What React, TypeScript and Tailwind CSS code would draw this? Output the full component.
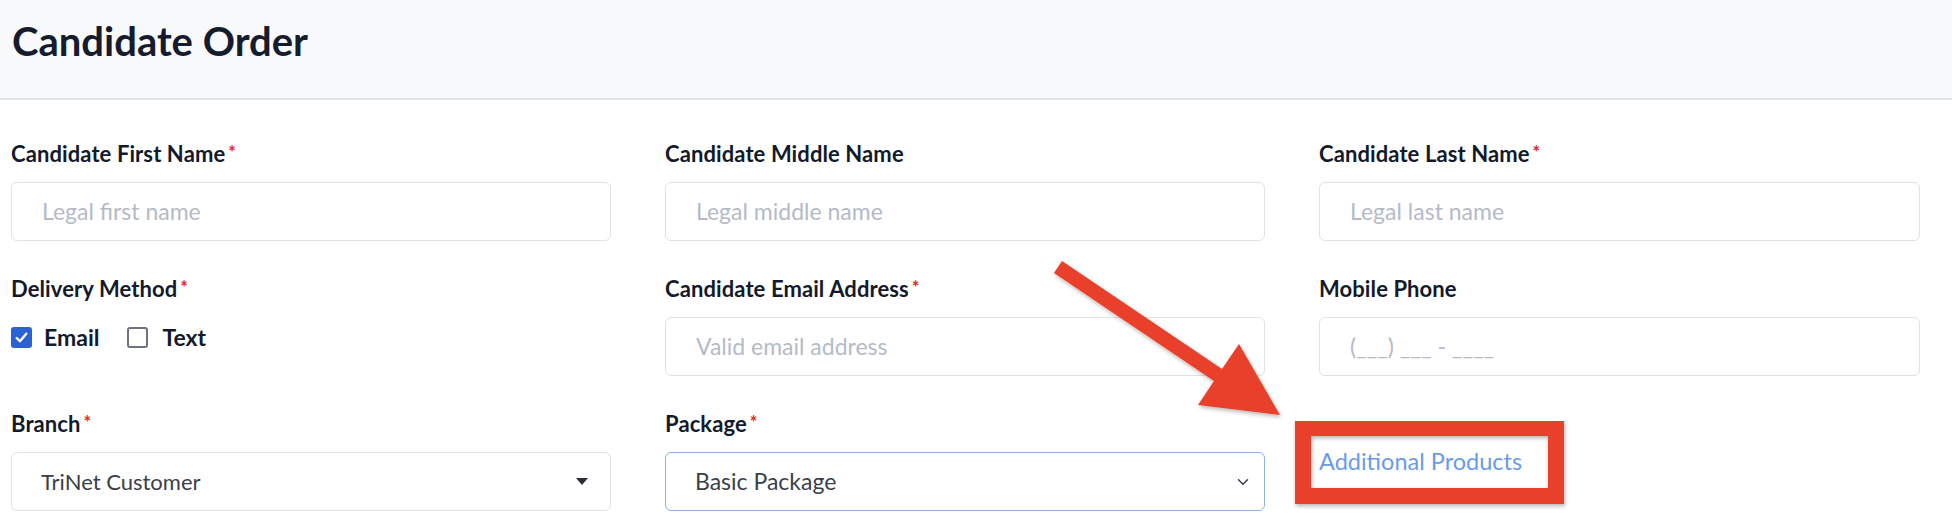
import { ChevronDown } from 'lucide-react';

const Req = () => <span className="relative top-[-3px] ml-[3px] text-[18px] leading-none text-[#e5252a]">*</span>;

function Label({ text, required }: { text: string; required?: boolean }) {
  return (
    <div className="h-[24px] mb-[16px] text-[22px] leading-[24px] font-bold text-[#131a2b] whitespace-nowrap tracking-[0.1px]">
      {text}
      {required && <Req />}
    </div>
  );
}

function TextInput({ placeholder }: { placeholder: string }) {
  return (
    <div className="h-[59px] rounded-[6px] border border-[#dde2e9] bg-white flex items-center pl-[30px] text-[23px] text-[#b5bac7]">
      {placeholder}
    </div>
  );
}

export default function App() {
  return (
    <div className="relative w-full h-[514px] overflow-hidden bg-white font-['Lato',sans-serif]">
      <div className="h-[100px] bg-[#f8f9fb] border-b-2 border-[#dfe4ea] flex items-center pl-[12px] pb-[16px]">
        <h1 className="text-[40px] font-bold text-[#161c2d]">Candidate Order</h1>
      </div>

      <div className="pl-[11px] pt-[42px] grid grid-cols-[600px_600px_601px] gap-x-[54px] gap-y-[36px]">
        <div>
          <Label text="Candidate First Name" required />
          <TextInput placeholder="Legal first name" />
        </div>
        <div>
          <Label text="Candidate Middle Name" />
          <TextInput placeholder="Legal middle name" />
        </div>
        <div>
          <Label text="Candidate Last Name" required />
          <TextInput placeholder="Legal last name" />
        </div>

        <div>
          <Label text="Delivery Method" required />
          <div className="h-[59px] flex items-start pt-[3px] text-[23px] text-[#131a2b] font-bold">
            <label className="flex items-center gap-[12px]">
              <span className="w-[21px] h-[21px] rounded-[3px] bg-[#2a62d6] flex items-center justify-center">
                <svg width="15" height="15" viewBox="0 0 14 14" fill="none">
                  <path d="M2.5 7.5 L5.5 10.5 L11.5 3.5" stroke="white" strokeWidth="2.2" strokeLinecap="round" strokeLinejoin="round" />
                </svg>
              </span>
              Email
            </label>
            <label className="flex items-center gap-[14px] ml-[28px]">
              <span className="w-[21px] h-[21px] rounded-[3px] border-2 border-[#6e7280] bg-white" />
              Text
            </label>
          </div>
        </div>
        <div>
          <Label text="Candidate Email Address" required />
          <TextInput placeholder="Valid email address" />
        </div>
        <div>
          <Label text="Mobile Phone" />
          <TextInput placeholder="(___) ___ - ____" />
        </div>

        <div>
          <Label text="Branch" required />
          <div className="h-[59px] rounded-[6px] border border-[#dde2e9] bg-white flex items-center justify-between pl-[29px] pr-[22px] text-[22px] text-[#3a3f4b]">
            TriNet Customer
            <svg width="12" height="7" viewBox="0 0 12 7">
              <path d="M0 0 L12 0 L6 7 Z" fill="#2b2f38" />
            </svg>
          </div>
        </div>
        <div>
          <Label text="Package" required />
          <div className="h-[59px] rounded-[6px] border-[1.5px] border-[#8db1e6] bg-white flex items-center justify-between pl-[29px] pr-[12px] text-[23px] text-[#3a3f4b]">
            Basic Package
            <ChevronDown size={18} strokeWidth={2} className="text-[#3a3f4b]" />
          </div>
        </div>
        <div className="pt-[36px]">
          <a className="text-[23.5px] text-[#6a9bea] leading-[26px]">Additional Products</a>
        </div>
      </div>

      <svg className="absolute inset-0 pointer-events-none" width="1952" height="514" viewBox="0 0 1952 514">
        <defs>
          <filter id="sh" x="-10%" y="-10%" width="130%" height="130%">
            <feDropShadow dx="1" dy="2" stdDeviation="2" floodColor="#000" floodOpacity="0.3" />
          </filter>
        </defs>
        <polygon
          points="1062,261 1222,369 1239,344 1280,415 1198,405 1214,381 1054,273"
          fill="#e8412a"
          filter="url(#sh)"
        />
        <rect x="1303" y="428" width="253" height="68" fill="none" stroke="#e8412a" strokeWidth="16" filter="url(#sh)" />
      </svg>
    </div>
  );
}
